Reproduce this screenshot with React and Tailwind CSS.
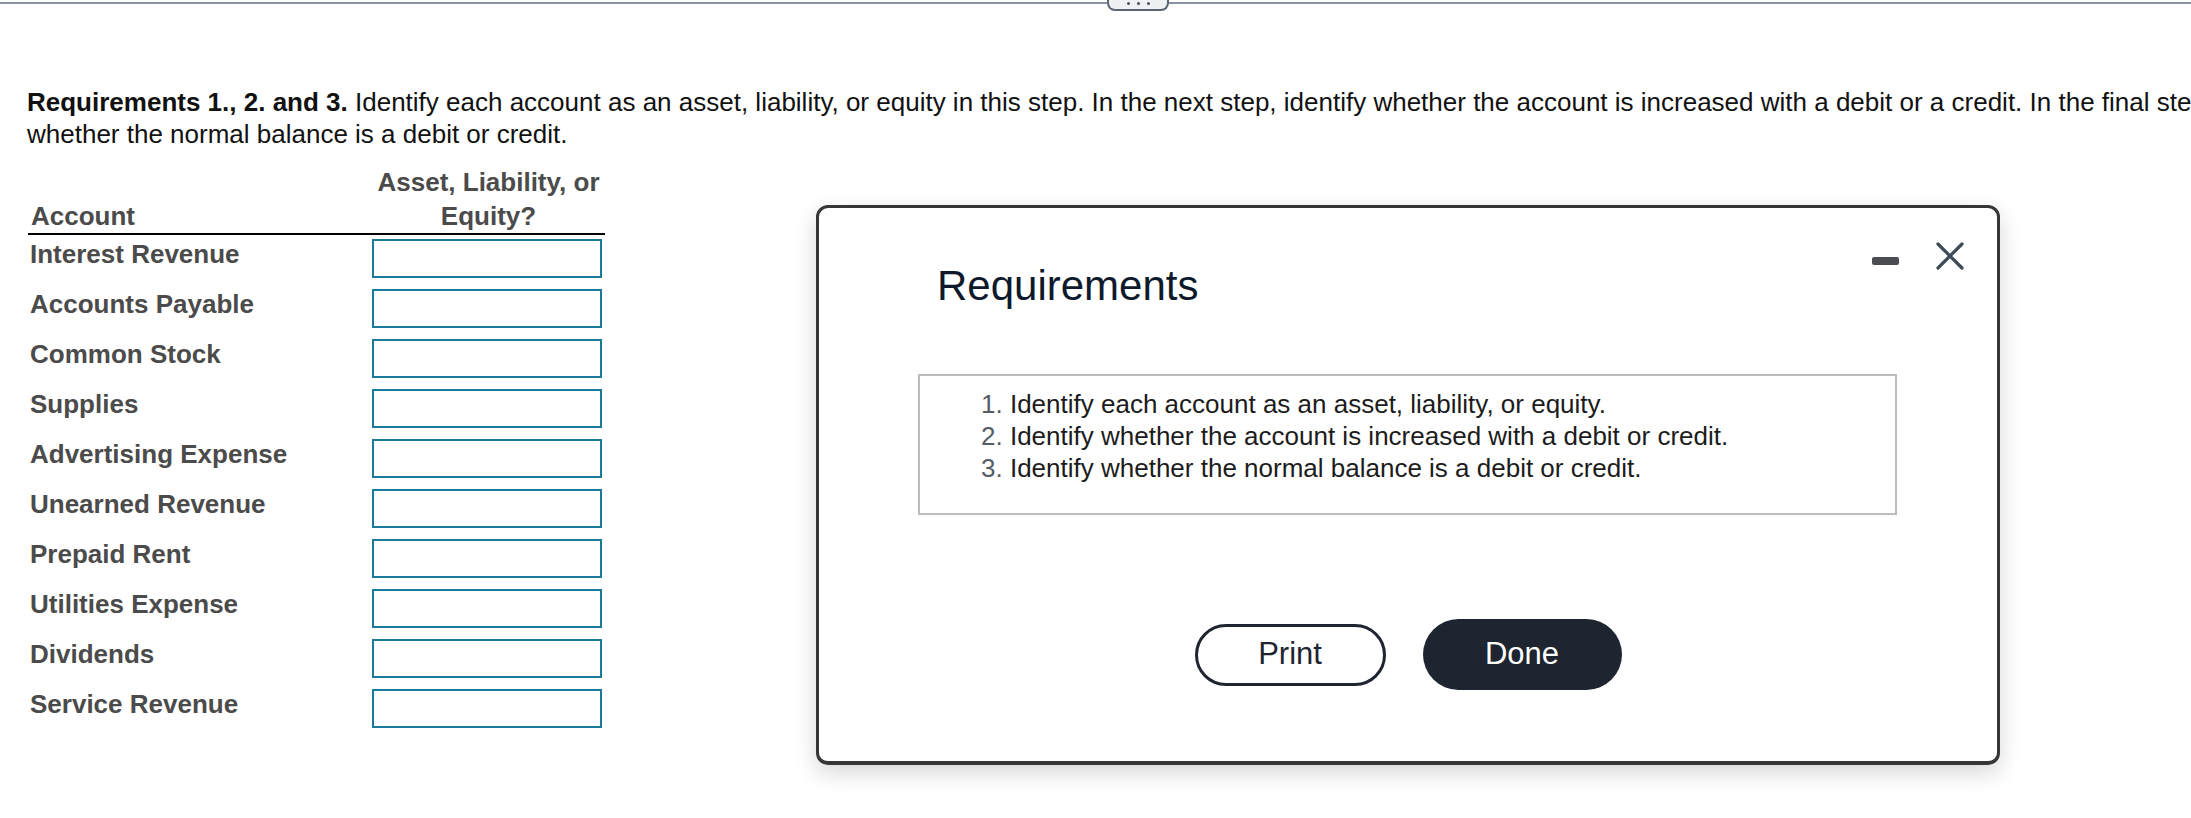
import React from 'react'

const accounts = [
  'Interest Revenue',
  'Accounts Payable',
  'Common Stock',
  'Supplies',
  'Advertising Expense',
  'Unearned Revenue',
  'Prepaid Rent',
  'Utilities Expense',
  'Dividends',
  'Service Revenue',
]

const reqs = [
  'Identify each account as an asset, liability, or equity.',
  'Identify whether the account is increased with a debit or credit.',
  'Identify whether the normal balance is a debit or credit.',
]

const font = { fontFamily: '"Liberation Sans", Arial, sans-serif' }

function TopBar() {
  return (
    <div className="flex items-start h-[12px]">
      <div className="w-[1107px] h-[2px] mt-[2px] bg-[#8a93a6]" />
      <div className="w-[62px] h-[11px] flex items-start justify-center gap-[7px] pt-[2px] bg-[#eef0f3] border-2 border-t-0 border-[#5b6675] rounded-b-[8px]">
        <span className="w-[3px] h-[3px] rounded-full bg-[#4a5060]" />
        <span className="w-[3px] h-[3px] rounded-full bg-[#4a5060]" />
        <span className="w-[3px] h-[3px] rounded-full bg-[#4a5060]" />
      </div>
      <div className="flex-1 h-[2px] mt-[2px] bg-[#8a93a6]" />
    </div>
  )
}

function AccountTable() {
  return (
    <div className="w-[577px] ml-[28px] mt-[16px] text-[26px] font-bold text-[#4b4b4b]">
      <div className="flex items-end h-[69px] border-b-2 border-black">
        <div className="w-[344px] pl-[3px] leading-[34px]">Account</div>
        <div className="w-[233px] text-center leading-[34px]">
          Asset, Liability, or
          <br />
          Equity?
        </div>
      </div>
      {accounts.map((name) => (
        <div key={name} className="flex items-start h-[50px]">
          <div className="w-[344px] pl-[2px] mt-[4px] leading-[30px]">{name}</div>
          <div className="w-[230px] h-[39px] mt-[4px] border-2 border-[#1b7a99] bg-white" />
        </div>
      ))}
    </div>
  )
}

function RequirementsModal() {
  return (
    <div className="ml-[211px] mt-[55px] w-[1184px] h-[560px] bg-white border-[3px] border-b-[4px] border-[#363636] rounded-[12px] shadow-[0_8px_22px_rgba(0,0,0,0.16)]">
      <div className="flex justify-between items-start">
        <div className="pl-[118px] pt-[54px] text-[42px] leading-[48px] text-[#0e1a2c]">Requirements</div>
        <div className="flex items-start gap-[37px] pt-[34px] pr-[33px]">
          <div className="w-[27px] h-[8px] mt-[15px] rounded-[2px] bg-[#4a4d52]" />
          <svg width="28" height="28" viewBox="0 0 28 28">
            <path d="M2 2 L26 26 M26 2 L2 26" stroke="#3d4b59" strokeWidth="3.2" strokeLinecap="round" fill="none" />
          </svg>
        </div>
      </div>
      <div className="ml-[99px] mt-[64px] w-[979px] h-[141px] border-2 border-[#bcbcbc] pt-[12px] pl-[61px] text-[26px] leading-[32px] text-[#1c1c1c]">
        {reqs.map((r, i) => (
          <div key={i}>
            <span className="text-[#555d66]">{i + 1}.</span> {r}
          </div>
        ))}
      </div>
      <div className="flex justify-center items-center gap-[37px] mt-[104px]">
        <button className="w-[191px] h-[62px] rounded-full border-[3px] border-[#1e2430] text-[31px] text-[#1e2430] bg-white">
          Print
        </button>
        <button className="w-[199px] h-[71px] rounded-full bg-[#1e2430] text-[31px] text-white">
          Done
        </button>
      </div>
    </div>
  )
}

export default function App() {
  return (
    <div className="w-full h-[818px] overflow-hidden bg-white" style={font}>
      <TopBar />
      <div className="pl-[27px] mt-[74px] text-[26px] leading-[32px] text-[#111] whitespace-nowrap">
        <span className="font-bold">Requirements 1., 2. and 3.</span> Identify each account as an asset, liability, or equity in this step. In the next step, identify whether the account is increased with a debit or a credit. In the final step, identify
        <br />
        whether the normal balance is a debit or credit.
      </div>
      <div className="flex items-start">
        <AccountTable />
        <RequirementsModal />
      </div>
    </div>
  )
}
